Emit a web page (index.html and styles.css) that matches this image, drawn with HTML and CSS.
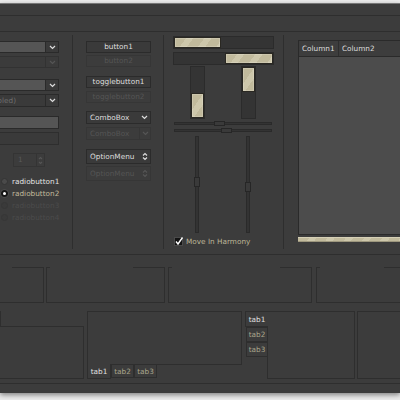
FILE: index.html
```html
<!DOCTYPE html>
<html>
<head>
<meta charset="utf-8">
<link rel="stylesheet" href="styles.css">
</head>
<body>
<div class="window">
  <div class="menubar"></div>
  <div class="toolbar"></div>
  <div class="main">
    <div class="col col1">
      <div class="combo c1"><div class="field"></div><div class="arrow"><svg width="7" height="5" viewBox="0 0 7 5"><polyline points="1,1 3.5,3.5 6,1" class="chev"/></svg></div></div>
      <div class="combo c2 disabled"><div class="field"></div><div class="arrow"><svg width="7" height="5" viewBox="0 0 7 5"><polyline points="1,1 3.5,3.5 6,1" class="chev"/></svg></div></div>
      <div class="combo c3"><div class="field"></div><div class="arrow"><svg width="7" height="5" viewBox="0 0 7 5"><polyline points="1,1 3.5,3.5 6,1" class="chev"/></svg></div></div>
      <div class="combo c4 dark"><div class="field"><span>(disabled)</span></div><div class="arrow"><svg width="7" height="5" viewBox="0 0 7 5"><polyline points="1,1 3.5,3.5 6,1" class="chev"/></svg></div></div>
      <div class="entry e1"></div>
      <div class="entry e2"></div>
      <div class="spin"><span class="spin-val">1</span><div class="spin-btns"><svg width="5" height="9" viewBox="0 0 5 9"><polyline points="1,3 2.5,1.5 4,3" class="chev dim"/><polyline points="1,6 2.5,7.5 4,6" class="chev dim"/></svg></div></div>
      <div class="radios">
        <div class="radio r1"><span class="dot"></span>radiobutton1</div>
        <div class="radio r2 on"><span class="dot"></span>radiobutton2</div>
        <div class="radio r3 off"><span class="dot"></span>radiobutton3</div>
        <div class="radio r4 off"><span class="dot"></span>radiobutton4</div>
      </div>
    </div>
    <div class="col col2">
      <div class="btn b1">button1</div>
      <div class="btn b2 disabled">button2</div>
      <div class="btn b3">togglebutton1</div>
      <div class="btn b4 disabled">togglebutton2</div>
      <div class="cbox cb1"><span>ComboBox</span><div class="cb-arrow"><svg width="7" height="5" viewBox="0 0 7 5"><polyline points="1,1 3.5,3.5 6,1" class="chev"/></svg></div></div>
      <div class="cbox cb2 disabled"><span>ComboBox</span><div class="cb-arrow sep"><svg width="7" height="5" viewBox="0 0 7 5"><polyline points="1,1 3.5,3.5 6,1" class="chev"/></svg></div></div>
      <div class="cbox om1"><span>OptionMenu</span><div class="cb-arrow"><svg width="6" height="9" viewBox="0 0 6 9"><polyline points="1,3.5 3,1.5 5,3.5" class="chev"/><polyline points="1,5.5 3,7.5 5,5.5" class="chev"/></svg></div></div>
      <div class="cbox om2 disabled"><span>OptionMenu</span><div class="cb-arrow"><svg width="6" height="9" viewBox="0 0 6 9"><polyline points="1,3.5 3,1.5 5,3.5" class="chev"/><polyline points="1,5.5 3,7.5 5,5.5" class="chev"/></svg></div></div>
    </div>
    <div class="col col3">
      <div class="trough pb1"><div class="fill" style="width:47px"></div></div>
      <div class="trough pb2"><div class="fill" style="width:48px"></div></div>
      <div class="vrow">
        <div class="trough vbar v1"><div class="fill" style="height:25px"></div></div>
        <div class="trough vbar v2"><div class="fill" style="height:25px"></div></div>
      </div>
      <div class="hscale hs1"><div class="slider"></div></div>
      <div class="hscale hs2"><div class="slider"></div></div>
      <div class="vsrow">
        <div class="vscale vs1"><div class="vslider"></div></div>
        <div class="vscale vs2"><div class="vslider"></div></div>
      </div>
      <div class="check"><svg width="10" height="10" viewBox="0 0 10 10"><rect x="0.5" y="1.5" width="8" height="8" class="cbox-rect"/><path d="M2 5.5 L4 8 L8.5 1.5" class="tick"/></svg><span>Move In Harmony</span></div>
    </div>
    <div class="col col4">
      <div class="tree">
        <div class="tree-head"><div class="th th1">Column1</div><div class="th th2">Column2</div></div>
      </div>
      <div class="hscroll"></div>
    </div>
  </div>
  <div class="hsep"></div>
  <div class="frames">
    <div class="frame fa"></div>
    <div class="frame fb"></div>
    <div class="frame fc"></div>
    <div class="frame fd"></div>
  </div>
  <div class="notebooks">
    <div class="nb nb1">
      <div class="nb1-tabs"><div class="tab t-top"></div></div>
      <div class="nb1-page"></div>
    </div>
    <div class="nb nb2">
      <div class="nb2-page"></div>
      <div class="nb2-tabs">
        <div class="tab btab active">tab1</div>
        <div class="tab btab">tab2</div>
        <div class="tab btab">tab3</div>
        <div class="btab-fill"></div>
      </div>
    </div>
    <div class="nb nb3">
      <div class="nb3-tabs">
        <div class="tab ltab active">tab1</div>
        <div class="tab ltab">tab2</div>
        <div class="tab ltab">tab3</div>
        <div class="ltab-fill"></div>
      </div>
      <div class="nb3-page"></div>
    </div>
    <div class="nb nb4"></div>
  </div>
  <div class="statusbar"></div>
</div>
</body>
</html>
```

FILE: styles.css
```css
* { box-sizing: border-box; }
html, body { margin: 0; padding: 0; }
body {
  width: 400px;
  height: 400px;
  overflow: hidden;
  background: #ececec;
  font-family: "DejaVu Sans", sans-serif;
  font-size: 7.3px;
  color: #dedede;
}
.window {
  margin-top: 3px;
  width: 400px;
  height: 390px;
  background: #3c3c3c;
  border-top: 1px solid #777;
  box-shadow: 0 2px 5px rgba(0,0,0,0.45);
  display: flex;
  flex-direction: column;
}
.menubar { height: 12px; border-bottom: 1px solid #2e2e2e; flex: none; }
.toolbar { height: 16px; border-bottom: 1px solid #2e2e2e; flex: none; }
.main { height: 222px; display: flex; align-items: flex-start; flex: none; }
.col { margin-top: 3px; height: 214px; display: flex; flex-direction: column; flex: none; }
.col1 { margin-left: -40px; width: 113px; border-right: 1px solid #2e2e2e; padding-top: 6px; }
.col2 { width: 91px; border-right: 1px solid #2e2e2e; padding: 6px 0 0 13px; }
.col3 { width: 120px; border-right: 1px solid #2e2e2e; padding: 1px 0 0 9px; }
.col4 { flex: 1; padding: 5px 0 0 14px; }

.chev { fill: none; stroke: #dcdcdc; stroke-width: 1.2; }
.chev.dim, .disabled .chev { stroke: #555; }

/* column 1 */
.combo { display: flex; height: 12px; flex: none; }
.combo .field { width: 86px; background: #555; border: 1px solid #2a2a2a; display: flex; justify-content: flex-end; align-items: center; padding-right: 29px; overflow: hidden; color: #6e6e6e; white-space: nowrap; }
.combo .arrow { width: 13px; border: 1px solid #2a2a2a; border-left: none; background: #3a3a3a; display: flex; align-items: center; justify-content: center; }
.combo.disabled .field { background: #3b3b3b; border-color: #323232; }
.combo.disabled .arrow { background: #3b3b3b; border-color: #323232; }
.combo.dark .field { background: #3a3a3a; }
.c1 { margin-top: 0; }
.c2 { margin-top: 3px; }
.c3 { margin-top: 11px; }
.c4 { margin-top: 3px; height: 13px; }
.entry { width: 99px; height: 13px; border: 1px solid #2a2a2a; flex: none; }
.e1 { margin-top: 9px; background: #555; }
.e2 { margin-top: 3px; background: #3a3a3a; border-color: #2e2e2e; }
.spin { margin: 8px 0 0 53px; width: 32px; height: 14px; border: 1px solid #343434; display: flex; flex: none; }
.spin-val { flex: 1; color: #5a5a5a; padding-left: 4px; line-height: 12px; }
.spin-btns { width: 8px; border-left: 1px solid #343434; display: flex; align-items: center; justify-content: center; }
.radios { margin-top: 8px; display: flex; flex-direction: column; }
.radio { height: 12px; display: flex; align-items: center; margin-left: 41px; gap: 4px; white-space: nowrap; color: #e2e2e2; }
.radio .dot { width: 7px; height: 7px; border-radius: 50%; background: #4a4a4a; border: 1px solid #343434; flex: none; }
.radio.on { color: #c0b99b; }
.radio.on .dot { background: #fff; border: 2px solid #151515; box-shadow: 0 0 0 0.5px #5a5a5a; }
.radio.off { color: #4b4b4b; }
.radio.off .dot { background: #3a3a3a; border-color: #363636; }

/* column 2 */
.btn { width: 65px; height: 12px; border: 1px solid #2b2b2b; background: #3a3a3a; text-align: center; line-height: 10px; flex: none; white-space: nowrap; }
.btn.disabled { color: #555; border-color: #363636; background: #3c3c3c; }
.b2 { margin-top: 2px; }
.b3 { margin-top: 9px; }
.b4 { margin-top: 3px; }
.cbox { width: 65px; height: 13px; border: 1px solid #2b2b2b; background: #3a3a3a; display: flex; align-items: stretch; flex: none; }
.cbox span { flex: 1; padding-left: 3px; display: flex; align-items: center; white-space: nowrap; }
.cb-arrow { width: 11px; display: flex; align-items: center; justify-content: center; }
.cb-arrow.sep { border-left: 1px solid #363636; }
.cbox.disabled { border-color: #363636; background: #3c3c3c; color: #555; }
.cb1 { margin-top: 8px; }
.cb2 { margin-top: 3px; }
.om1 { margin-top: 9px; height: 15px; }
.om2 { margin-top: 2px; height: 15px; }

/* column 3 */
.trough { border: 1px solid #2b2b2b; background: #343434; display: flex; flex: none; }
.fill {
  background: repeating-linear-gradient(125deg, #c1ba9c 0 9px, #cdc7ab 9px 15px);
  border: 1px solid #2a2822;
  box-shadow: inset 0 0 0 1px rgba(255,255,255,0.18);
}
.pb1 { width: 101px; height: 13px; }
.pb2 { width: 101px; height: 13px; margin-top: 3px; justify-content: flex-end; }
.vrow { display: flex; margin-top: 1px; height: 53px; flex: none; }
.vbar { width: 15px; height: 53px; flex-direction: column; }
.vbar .fill { width: 100%; }
.v1 { margin-left: 17px; justify-content: flex-end; }
.v2 { margin-left: 36px; }
.hscale { width: 98px; height: 3px; margin-left: 1px; border: 1px solid #2a2a2a; background: #333; display: flex; align-items: center; flex: none; }
.slider { width: 11px; height: 5px; background: #3a3a3a; border: 1px solid #262626; flex: none; }
.hs1 { margin-top: 3px; }
.hs1 .slider { margin-left: 39px; }
.hs2 { margin-top: 4px; }
.hs2 .slider { margin-left: 46px; }
.vsrow { display: flex; margin-top: 4px; height: 97px; flex: none; }
.vscale { width: 4px; height: 97px; border: 1px solid #2a2a2a; background: #333; display: flex; flex-direction: column; align-items: center; }
.vslider { width: 6px; height: 10px; background: #3a3a3a; border: 1px solid #262626; flex: none; }
.vs1 { margin-left: 22px; }
.vs1 .vslider { margin-top: 40px; }
.vs2 { margin-left: 47px; }
.vs2 .vslider { margin-top: 45px; }
.check { display: flex; align-items: center; margin: 3px 0 0 1px; height: 10px; gap: 2px; color: #bdb697; white-space: nowrap; }
.cbox-rect { fill: #141414; stroke: #4a4a4a; stroke-width: 1; }
.tick { fill: none; stroke: #fff; stroke-width: 1.4; }

/* column 4 */
.tree { width: 120px; height: 195px; border: 1px solid #2a2a2a; background: #4c4c4c; }
.tree-head { height: 16px; background: #3d3d3d; border-bottom: 1px solid #2a2a2a; display: flex; }
.th { display: flex; align-items: center; padding-left: 3px; white-space: nowrap; color: #dcdcdc; }
.th1 { width: 40px; border-right: 1px solid #2e2e2e; }
.th2 { flex: 1; }
.hscroll { margin-top: 2px; width: 120px; height: 5px; background: repeating-linear-gradient(125deg, #c1ba9c 0 9px, #cdc7ab 9px 15px); border-top: 1px solid #d6d0b6; border-bottom: 1px solid #9d977e; }

.hsep { height: 1px; background: #2e2e2e; flex: none; }

/* frames */
.frames { display: flex; margin-top: 12px; height: 36px; flex: none; }
.frame {
  height: 36px;
  border: 1px solid #2e2e2e;
  border-top: none;
  background:
    linear-gradient(#2e2e2e, #2e2e2e) right top / 31px 1px no-repeat,
    linear-gradient(#2e2e2e, #2e2e2e) left top / 3px 1px no-repeat;
  flex: none;
}
.fa { margin-left: -20px; width: 64px; }
.fb { margin-left: 2px; width: 119px; }
.fc { margin-left: 3px; width: 144px; }
.fd { margin-left: 4px; width: 100px; }

/* notebooks */
.notebooks { display: flex; margin-top: 8px; height: 68px; flex: none; }
.nb { flex: none; }
.tab { border: 1px solid #2e2e2e; color: #a9a58b; display: flex; align-items: center; justify-content: center; white-space: nowrap; }
.tab.active { color: #e0e0e0; }
.nb1 { margin-left: -30px; width: 114px; display: flex; flex-direction: column; }
.nb1-tabs { height: 15px; display: flex; }
.t-top { width: 31px; height: 15px; border-bottom: none; }
.nb1-page { flex: 1; border: 1px solid #2e2e2e; border-top: none; background: linear-gradient(#2e2e2e, #2e2e2e) right top / 83px 1px no-repeat; }
.nb2 { margin-left: 3px; width: 155px; display: flex; flex-direction: column; }
.nb2-page { height: 53px; border: 1px solid #2e2e2e; border-bottom: none; }
.nb2-tabs { display: flex; align-items: flex-start; height: 15px; }
.btab { height: 14px; width: 23px; }
.btab.active { width: 24px; height: 15px; border-top: none; }
.btab-fill { flex: 1; border-top: 1px solid #2e2e2e; border-right: 1px solid #2e2e2e; height: 1px; }
.nb3 { margin-left: 3px; display: flex; }
.nb3-tabs { width: 23px; display: flex; flex-direction: column; align-items: flex-end; }
.ltab { width: 22px; height: 15px; }
.ltab.active { width: 23px; height: 16px; border-right: none; }
.ltab-fill { flex: 1; width: 1px; border-right: 1px solid #2e2e2e; }
.nb3-page { width: 87px; height: 68px; border: 1px solid #2e2e2e; border-left: none; }
.nb4 { margin-left: 2px; width: 60px; height: 68px; border: 1px solid #2e2e2e; }

.statusbar { margin-top: 4px; height: 1px; background: #2e2e2e; flex: none; }
```
